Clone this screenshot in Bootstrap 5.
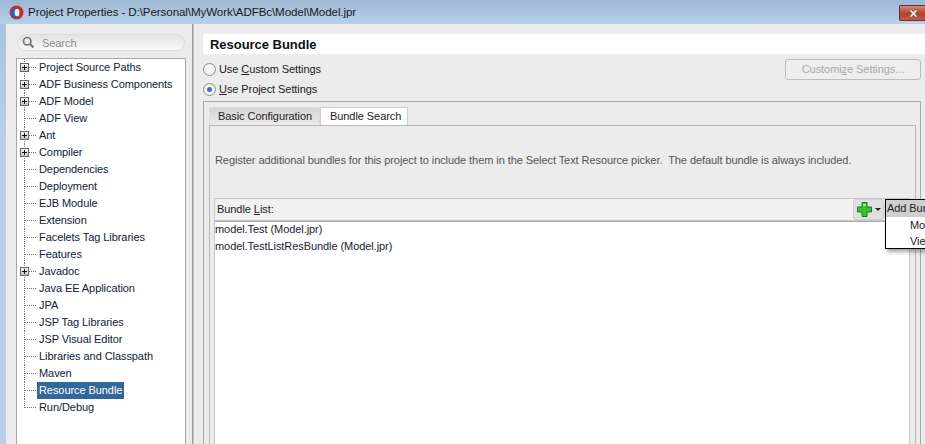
<!DOCTYPE html>
<html><head><meta charset="utf-8">
<link href="https://cdn.jsdelivr.net/npm/bootstrap@5.3.0/dist/css/bootstrap.min.css" rel="stylesheet">
<style>
html,body{height:444px;overflow:hidden}
body{font-family:"Liberation Sans",sans-serif;font-size:11px;letter-spacing:-.07px;color:#111;background:#ececec;width:925px;position:relative}
.titlebar{height:24px;background:linear-gradient(#9db8d3,#b8d0ea);font-size:11.6px;letter-spacing:-.1px;color:#1a1a1a;padding-left:9px;gap:4px}
.closex{width:26px;height:16px;margin:5px 0 0 auto;align-self:flex-start;background:linear-gradient(#d98a78,#b33f2d 55%,#c65a45);border:1px solid #6b2a38;border-right:0;border-radius:2px 0 0 2px;padding-left:8px;line-height:0}
.wbody{height:420px;padding-left:6px;background:linear-gradient(#a9c4e0,#b9d1ea 30%)}
.inner{background:#ececec;flex:1;min-width:0;height:100%}
.leftcol{width:186px;padding:10px 0 0 10px;flex:none}
.searchbox{height:17px;width:168px;margin-left:1px;border:1px solid #dcdcdc;border-radius:9px;background:linear-gradient(#e4e4e4,#f8f8f8);color:#8c8c8c;padding-left:4px;gap:7px}
.searchbox span{padding-top:1px}
.treebox{width:170px;height:400px;margin-top:7px;background:#fff;border:1px solid #a8a8a8}
.trow{height:17px;padding-left:20px;position:relative;white-space:nowrap;color:#10203a}
.trow::before{content:"";position:absolute;left:7px;top:0;bottom:0;border-left:1px dotted #777}
.trow.lastr::before{bottom:8px}
.trow::after{content:"";position:absolute;left:8px;top:8px;width:11px;border-top:1px dotted #777}
.exp{position:absolute;left:3px;top:4px;width:9px;height:9px;border:1px solid #666;background:linear-gradient(#f5f5f0,#c8c4b8);z-index:1}
.exp::before{content:"";position:absolute;left:1px;right:1px;top:3px;height:1px;background:#111}
.exp::after{content:"";position:absolute;top:1px;bottom:1px;left:3px;width:1px;background:#111}
.tlabel{padding:0 2px;line-height:17px;display:inline-block;height:17px}
.tsel{background:#336699;color:#fff}
.sep{width:2px;height:100%;background:#9a9a9a;flex:none;border-right:1px solid #c8c8c8}
.rightcol{flex:1;min-width:0;padding:10px 0 0 9px;position:relative}
.heading{height:20px;background:#fff;font-weight:700;font-size:13px;letter-spacing:-.03px;padding-left:7px;line-height:21px;color:#111}
.optrow{height:20px;gap:3px;color:#222}
.radio{width:13px;height:13px;border:1px solid #8a8a8a;border-radius:50%;background:#f4f4f4;display:inline-flex;align-items:center;justify-content:center;flex:none}
.radio i{width:5px;height:5px;border-radius:50%;background:#3f6fc0;display:block}
.custbtn{width:136px;height:21px;border:1px solid #bdbdbd;border-radius:3px;color:#a9a9a9;background:#eee;margin-left:auto;margin-right:4px;text-align:center;line-height:19px}
.topblock{height:47px;padding-top:5px}
.tabpanel{border:1px solid #a8a8a8;border-bottom:0;height:343px;padding:5px 0 0 5px;margin-right:4px}
.tabsline{height:18px}
.tabx{height:18px;line-height:17px;padding:0 8px;color:#222;white-space:nowrap}
.tab0{background:linear-gradient(#d4d4d4,#ececec);border:1px solid #dcdcdc;border-bottom:0;width:111px}
.tab1{background:#fff;border:1px solid #cfcfcf;border-bottom:0;width:88px;padding-left:9px}
.tabbody{border:1px solid #b8b8b8;border-bottom:0;height:320px;margin-right:4px;padding:26px 0 0 4px}
.desc{color:#555;height:46px;line-height:16px;white-space:nowrap;padding-left:1px}
.listhead{height:23px;background:#f1f1f1;border:1px solid #c6c6c6;padding-left:2px;margin-right:5px;color:#222}
.listbody{background:#fff;border:1px solid #c6c6c6;border-top:1px solid #aaa;height:240px;margin-right:5px;color:#1c2230}
.listbody div{height:17px;line-height:15px;white-space:nowrap}
.plusbtn{margin-left:auto;width:31px;height:21px;background:#e0e0e0;border:1px solid #cfcfcf;border-radius:3px;gap:2px;padding-left:2px;margin-right:25px}
.caret{width:0;height:0;border-left:3px solid transparent;border-right:3px solid transparent;border-top:3px solid #222}
.popup{position:absolute;left:885px;top:199px;width:50px;height:50px;background:#fff;border:1px solid #000;box-shadow:2px 3px 4px rgba(0,0,0,.35);color:#222;white-space:nowrap;overflow:hidden}
.popup .ph{height:17px;line-height:16px;background:#cfcfcf;padding-left:1px}
.popup .pi{height:16px;line-height:16px;padding-left:24px}
u{text-underline-offset:1px}
</style></head><body>
<div class="titlebar d-flex align-items-center">
<svg width="15" height="15" viewBox="0 0 14 14"><circle cx="7" cy="7" r="6.500" fill="#d8281c"/><circle cx="6" cy="7.500" r="4.600" fill="#2c62b4"/><ellipse cx="7.500" cy="7" rx="2.200" ry="3.600" fill="#f4f4f4"/></svg>
<span>Project Properties - D:\Personal\MyWork\ADFBc\Model\Model.jpr</span>
<span class="closex d-block"><svg width="11" height="9" viewBox="0 0 11 9" style="margin-top:3px"><path d="M1 1h2.400l2.100 2 2.100-2H10L7 4.500 10 8H7.600L5.500 6 3.400 8H1l3-3.500z" fill="#fff" stroke="#555" stroke-width=".6"/></svg></span>
</div>
<div class="wbody d-flex"><div class="inner d-flex">
<div class="leftcol">
<div class="searchbox d-flex align-items-center"><svg width="13" height="13" viewBox="0 0 13 13"><circle cx="5.200" cy="5.200" r="3.700" fill="none" stroke="#777" stroke-width="1.700"/><path d="M8 8l3.500 3.500" stroke="#777" stroke-width="2.200"/></svg><span>Search</span></div>
<div class="treebox" id="tree"></div>
</div>
<div class="sep"></div>
<div class="rightcol">
<div class="heading">Resource Bundle</div>
<div class="d-flex topblock">
<div>
<div class="optrow d-flex align-items-center"><span class="radio"></span><span>Use <u>C</u>ustom Settings</span></div>
<div class="optrow d-flex align-items-center"><span class="radio"><i></i></span><span><u>U</u>se Project Settings</span></div>
</div>
<div class="custbtn">Customi<u>z</u>e Settings...</div>
</div>
<div class="tabpanel">
<div class="d-flex tabsline"><div class="tabx tab0">Basic Configuration</div><div class="tabx tab1">Bundle Search</div></div>
<div class="tabbody">
<div class="desc">Register additional bundles for this project to include them in the Select Text Resource picker.&nbsp; The default bundle is always included.</div>
<div class="listhead d-flex align-items-center"><span>Bundle <u>L</u>ist:</span>
<span class="plusbtn d-flex align-items-center"><svg width="17" height="17" viewBox="0 0 17 17"><path d="M6 1.500h5v4.500h4.500v5H11v4.500H6V11H1.500V6H6z" fill="#35c335" stroke="#1c7a1c" stroke-linejoin="round"/><path d="M7 3h3v2H7z" fill="#9fe89f"/></svg><i class="caret"></i></span></div>
<div class="listbody"><div>model.Test (Model.jpr)</div><div>model.TestListResBundle (Model.jpr)</div></div>
</div>
</div>
</div>
</div></div>
<div class="popup"><div class="ph">Add Bundle</div><div class="pi">Model</div><div class="pi">View</div></div>
<script>
const t=[["Project Source Paths",1],["ADF Business Components",1],["ADF Model",1],["ADF View",0],["Ant",1],["Compiler",1],["Dependencies",0],["Deployment",0],["EJB Module",0],["Extension",0],["Facelets Tag Libraries",0],["Features",0],["Javadoc",1],["Java EE Application",0],["JPA",0],["JSP Tag Libraries",0],["JSP Visual Editor",0],["Libraries and Classpath",0],["Maven",0],["Resource Bundle",0],["Run/Debug",0]];
document.getElementById('tree').innerHTML=t.map((r,i)=>`<div class="trow${i==t.length-1?' lastr':''}">${r[1]?'<i class="exp"></i>':''}<span class="tlabel${r[0]=='Resource Bundle'?' tsel':''}">${r[0]}</span></div>`).join('');
</script>
<script src="https://cdn.jsdelivr.net/npm/bootstrap@5.3.0/dist/js/bootstrap.bundle.min.js"></script>
</body></html>
